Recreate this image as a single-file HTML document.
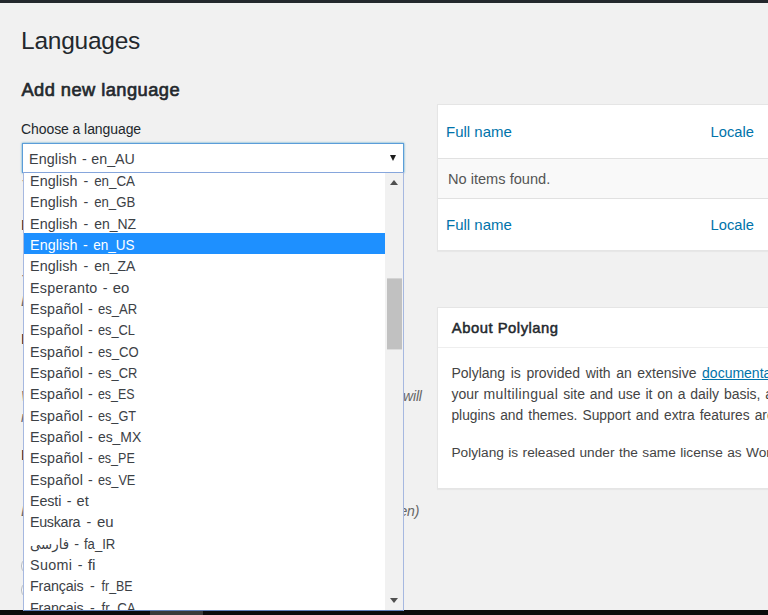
<!DOCTYPE html>
<html lang="en">
<head>
<meta charset="utf-8">
<title>Languages</title>
<style>
html,body{margin:0;padding:0}
body{width:768px;height:615px;overflow:hidden;position:relative;background:#f1f1f1;font-family:"Liberation Sans","DejaVu Sans",sans-serif;color:#444;}
.abs{position:absolute;white-space:nowrap;margin:0;padding:0}
#topbar{left:0;top:0;width:768px;height:3px;background:#23282d}
#botbar{left:0;top:610px;width:768px;height:5px;background:#0b0b0b}
#botseg{left:150px;top:610px;width:53px;height:5px;background:#3a3a3a}
h1.abs{left:21px;top:27px;font-size:24.5px;line-height:28px;font-weight:400;color:#23282d;letter-spacing:-0.25px}
h3.abs{left:21.4px;top:79px;font-size:18.3px;line-height:22px;font-weight:400;color:#23282d;-webkit-text-stroke:0.65px #23282d;letter-spacing:0.45px}
#lbl{left:21px;top:121px;font-size:14px;line-height:17px;color:#23282d;letter-spacing:-0.08px}
#sel{left:22px;top:143px;width:380px;height:28px;border:1px solid #5b9dd9;background:#fff;box-shadow:0 0 2px rgba(30,140,190,.8)}
#seltxt{left:29.3px;top:150px;font-size:15.4px;line-height:18px;color:#3c4146}
#selarr{left:390px;top:155px;width:0;height:0;border-left:3.8px solid transparent;border-right:3.8px solid transparent;border-top:6.5px solid #1d1d1d}
#dd{left:23px;top:172px;width:379px;height:437px;border:1px solid #a6b8e0;border-top:1px solid #86a6dc;border-bottom:1px solid #5f7fb8;background:#fff;overflow:hidden}
#dd .opt{position:absolute;left:0;width:361px;height:21.4px;line-height:23px;overflow:hidden;font-size:15.4px;word-spacing:1.2px;color:#3c4146;padding-left:6.3px;box-sizing:border-box;white-space:nowrap}
#dd .sx,#dd .cx,#seltxt .sx,#seltxt .cx{display:inline-block;transform:scaleX(0.93);transform-origin:0 50%}
#dd .opt.sel{background:#1e90ff;color:#fff}
#dd .fa{letter-spacing:0;font-family:"DejaVu Sans",sans-serif;font-size:14.3px}
#sbar{position:absolute;left:361px;top:0;width:18px;height:437px;background:#f1f1f1}
#thumb{position:absolute;left:2px;top:105px;width:15px;height:71px;background:#c1c1c1;transform:translateY(0.4px)}
#up{position:absolute;left:5px;top:7px;width:0;height:0;border-left:4.5px solid transparent;border-right:4.5px solid transparent;border-bottom:5px solid #505050}
#down{position:absolute;left:5px;top:425px;width:0;height:0;border-left:4.5px solid transparent;border-right:4.5px solid transparent;border-top:5px solid #505050}
.peek{font-size:14px;font-style:italic;color:#666;line-height:17px}
.flab{left:21px;font-size:14px;line-height:17px;color:#23282d}
.radio{left:21px;width:16px;height:16px;border:1px solid #b4b9be;border-radius:50%;background:#fff}
.box{background:#fff;border:1px solid #e5e5e5;box-shadow:0 1px 1px rgba(0,0,0,.04)}
#tbl{left:437px;top:104px;width:400px;height:145px}
#tbl .hb{position:absolute;left:0;width:400px;height:1px;background:#e1e1e1}
#tbl .row{position:absolute;left:0;top:54px;width:400px;height:39px;background:#f9f9f9}
.lnk{color:#0073aa;font-size:15px;line-height:18px}
#about{left:437px;top:307px;width:400px;height:180px}
#about .hb{position:absolute;left:0;top:39px;width:400px;height:1px;background:#eee}
#abt{left:451.8px;top:319px;font-size:14.8px;font-weight:400;line-height:18px;color:#23282d;-webkit-text-stroke:0.5px #23282d;letter-spacing:0.52px}
.pl{left:451.4px;font-size:14px;line-height:17px;color:#444}
.pl a{color:#0073aa;text-decoration:underline}
</style>
</head>
<body>
<div id="topbar" class="abs"></div>

<h1 class="abs">Languages</h1>
<h3 class="abs">Add new language</h3>
<div id="lbl" class="abs">Choose a language</div>

<p class="abs peek" style="left:21px;top:177px">You can choose a language in the list or directly edit it below.</p>
<label class="abs flab" style="top:217px">Full name</label>
<p class="abs peek" style="left:21px;top:272px;letter-spacing:-0.1px">The name is how it is displayed on your site (for example:</p>
<p class="abs peek" style="left:21px;top:293px">English).</p>
<label class="abs flab" style="top:331px">Locale</label>
<p class="abs peek" id="pk1" style="right:346.2px;top:388px;letter-spacing:-0.165px">WordPress Locale for the language (for example: en_US). You will</p>
<p class="abs peek" style="left:21px;top:409px">need to install the .mo file for this language.</p>
<label class="abs flab" style="top:447px">Language code</label>
<p class="abs peek" id="pk2" style="right:348.6px;top:502.5px;letter-spacing:-0.073px">Language code - preferably 2-letters ISO 639-1 (for example: en)</p>
<span class="abs radio" style="top:557px"></span>
<span class="abs radio" style="top:581px"></span>

<div id="tbl" class="abs box">
  <div class="row"></div>
  <div class="hb" style="top:53px"></div>
  <div class="hb" style="top:93px"></div>
</div>
<div class="abs lnk" style="left:446px;top:123px">Full name</div>
<div class="abs lnk" style="left:710.6px;top:123px;font-size:14.7px">Locale</div>
<div class="abs" style="left:448px;top:171px;font-size:14.6px;line-height:17px;color:#555">No items found.</div>
<div class="abs lnk" style="left:446px;top:216px">Full name</div>
<div class="abs lnk" style="left:710.6px;top:216px;font-size:14.7px">Locale</div>

<div id="about" class="abs box"><div class="hb"></div></div>
<div id="abt" class="abs">About Polylang</div>
<div class="abs pl" style="top:365px;word-spacing:1.7px">Polylang is provided with an extensive <a>documentation</a></div>
<div class="abs pl" style="top:386px;word-spacing:0.95px">your <span style="letter-spacing:0.4px">multilingual</span> site and use it on a daily basis, as</div>
<div class="abs pl" style="top:407px;word-spacing:1.25px;font-size:13.8px">plugins and themes. Support and extra features are</div>
<div class="abs pl" style="top:444px;word-spacing:0.6px;font-size:13.7px">Polylang is released under the same license as WordPress</div>

<div id="botbar" class="abs"></div>
<div id="botseg" class="abs"></div>

<div id="sel" class="abs"></div>
<div id="seltxt" class="abs"><span class="sx"><span style="letter-spacing:0.13px">English</span><span style="word-spacing:1.2px"> - </span><span class="cx" style="transform:scaleX(0.995)">en_AU</span></span></div>
<div id="selarr" class="abs"></div>
<div id="dd" class="abs">
<div class="opt" style="top:-4.00px"><span class="sx"><span style="letter-spacing:0.107px">English</span><span style="word-spacing:1.980px"> - </span><span class="cx" style="transform:scaleX(0.933)">en_CA</span></span></div>
<div class="opt" style="top:17.33px"><span class="sx"><span style="letter-spacing:0.107px">English</span><span style="word-spacing:1.980px"> - </span><span class="cx" style="transform:scaleX(0.921)">en_GB</span></span></div>
<div class="opt" style="top:38.67px"><span class="sx"><span style="letter-spacing:0.107px">English</span><span style="word-spacing:1.980px"> - </span><span class="cx" style="transform:scaleX(0.975)">en_NZ</span></span></div>
<div class="opt sel" style="top:60.00px"><span class="sx"><span style="letter-spacing:0.107px">English</span><span style="word-spacing:1.580px"> - </span><span class="cx" style="transform:scaleX(0.942)">en_US</span></span></div>
<div class="opt" style="top:81.33px"><span class="sx"><span style="letter-spacing:0.107px">English</span><span style="word-spacing:1.980px"> - </span><span class="cx" style="transform:scaleX(0.976)">en_ZA</span></span></div>
<div class="opt" style="top:102.66px"><span class="sx"><span style="letter-spacing:0.280px">Esperanto</span><span style="word-spacing:1.260px"> - </span><span class="cx" style="transform:scaleX(1.042)">eo</span></span></div>
<div class="opt" style="top:124.00px"><span class="sx"><span style="letter-spacing:0.213px">Español</span><span style="word-spacing:0.940px"> - </span><span class="cx" style="transform:scaleX(0.913)">es_AR</span></span></div>
<div class="opt" style="top:145.33px"><span class="sx"><span style="letter-spacing:0.213px">Español</span><span style="word-spacing:0.940px"> - </span><span class="cx" style="transform:scaleX(0.896)">es_CL</span></span></div>
<div class="opt" style="top:166.66px"><span class="sx"><span style="letter-spacing:0.213px">Español</span><span style="word-spacing:0.940px"> - </span><span class="cx" style="transform:scaleX(0.913)">es_CO</span></span></div>
<div class="opt" style="top:188.00px"><span class="sx"><span style="letter-spacing:0.213px">Español</span><span style="word-spacing:0.940px"> - </span><span class="cx" style="transform:scaleX(0.900)">es_CR</span></span></div>
<div class="opt" style="top:209.33px"><span class="sx"><span style="letter-spacing:0.213px">Español</span><span style="word-spacing:0.940px"> - </span><span class="cx" style="transform:scaleX(0.866)">es_ES</span></span></div>
<div class="opt" style="top:230.66px"><span class="sx"><span style="letter-spacing:0.213px">Español</span><span style="word-spacing:0.940px"> - </span><span class="cx" style="transform:scaleX(0.888)">es_GT</span></span></div>
<div class="opt" style="top:252.00px"><span class="sx"><span style="letter-spacing:0.213px">Español</span><span style="word-spacing:0.940px"> - </span><span class="cx" style="transform:scaleX(0.973)">es_MX</span></span></div>
<div class="opt" style="top:273.33px"><span class="sx"><span style="letter-spacing:0.213px">Español</span><span style="word-spacing:0.940px"> - </span><span class="cx" style="transform:scaleX(0.875)">es_PE</span></span></div>
<div class="opt" style="top:294.66px"><span class="sx"><span style="letter-spacing:0.213px">Español</span><span style="word-spacing:0.940px"> - </span><span class="cx" style="transform:scaleX(0.888)">es_VE</span></span></div>
<div class="opt" style="top:316.00px"><span class="sx"><span style="letter-spacing:-0.120px">Eesti</span><span style="word-spacing:1.580px"> - </span><span class="cx" style="transform:scaleX(1.021)">et</span></span></div>
<div class="opt" style="top:337.33px"><span class="sx"><span style="letter-spacing:-0.347px">Euskara</span><span style="word-spacing:2.380px"> - </span><span class="cx" style="transform:scaleX(1.042)">eu</span></span></div>
<div class="opt" style="top:358.66px"><span class="sx"><span class="fa">فارسی</span><span style="word-spacing:1.260px"> - </span><span class="cx" style="transform:scaleX(0.917)">fa_IR</span></span></div>
<div class="opt" style="top:379.99px"><span class="sx"><span style="letter-spacing:0.360px">Suomi</span><span style="word-spacing:1.660px"> - </span><span class="cx" style="transform:scaleX(1.111)">fi</span></span></div>
<div class="opt" style="top:401.33px"><span class="sx"><span style="letter-spacing:-0.183px">Français</span><span style="word-spacing:2.700px"> - </span><span class="cx" style="transform:scaleX(0.866)">fr_BE</span></span></div>
<div class="opt" style="top:422.66px"><span class="sx"><span style="letter-spacing:-0.183px">Français</span><span style="word-spacing:2.700px"> - </span><span class="cx" style="transform:scaleX(0.930)">fr_CA</span></span></div>
  <div id="sbar"><div id="up"></div><div id="thumb"></div><div id="down"></div></div>
</div>

</body>
</html>
